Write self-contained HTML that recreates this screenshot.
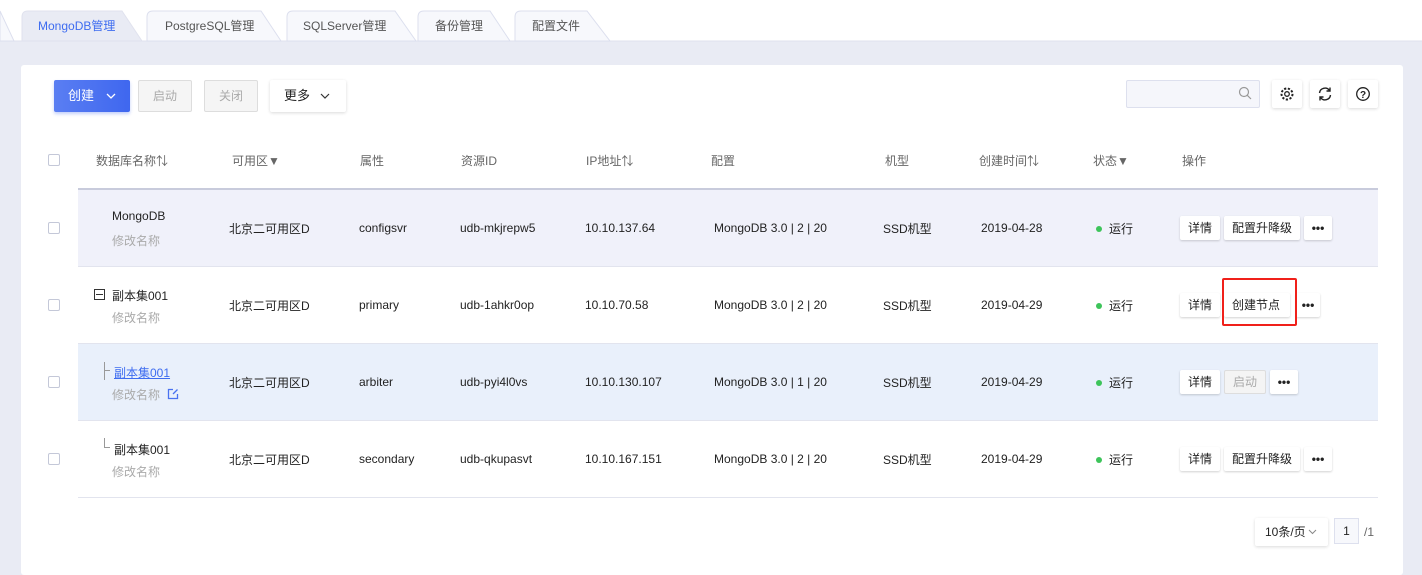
<!DOCTYPE html>
<html><head><meta charset="utf-8"><style>
*{margin:0;padding:0;box-sizing:border-box}
body{width:1422px;height:568px;overflow:hidden;background:#e9ebf4;font-family:"Liberation Sans","Noto Sans CJK SC",sans-serif;font-size:12px;color:#222;position:relative}
.a{position:absolute}
.tt{position:absolute;top:17px;font-size:12px;color:#555;white-space:nowrap}
.card{left:21px;top:65px;width:1382px;height:510px;background:#fff;border-radius:3px}
.btn{position:absolute;height:32px;border:1px solid #ddd;background:#f5f5f5;color:#aaa;text-align:center;line-height:30px;border-radius:2px}
.sb{position:absolute;background:#fff;border-radius:2px;box-shadow:0 1px 3px rgba(0,0,0,.15);text-align:center}
.th{position:absolute;top:152px;color:#666;font-size:12px;white-space:nowrap}
.row{position:absolute;left:78px;width:1300px;height:77px;border-bottom:1px solid #e2e4ee}
.cb{position:absolute;left:48px;width:12px;height:12px;border:1px solid #c4c8d8;border-radius:2px;background:#fff}
.c{position:absolute;font-size:12px;color:#222;white-space:nowrap}
.g{color:#aaa}
.dot{display:inline-block;width:6px;height:6px;border-radius:50%;background:#3dc45a;margin-right:7px;vertical-align:1px}
.ab{position:absolute;height:24px;line-height:24px;padding:0 8px;background:#fff;box-shadow:0 1px 2px rgba(0,0,0,.18);border-radius:2px;font-size:12px;color:#222;white-space:nowrap}
</style></head><body>
<svg class="a" style="left:0;top:0" width="1422" height="42">
<rect x="0" y="0" width="1422" height="41" fill="#fff"/>
<path d="M0 41H1422" stroke="#dfe1ee"/>
<path d="M0 11L14 41H0Z" fill="#f7f8fc" stroke="#dcdfee"/>
<path d="M22 41V17Q22 11 28 11H122L142 41Z" fill="#e9ebf4" stroke="#e0e2ee"/>
<path d="M147 41V17Q147 11 153 11H261L281 41Z" fill="#f7f8fc" stroke="#dcdfee"/>
<path d="M287 41V17Q287 11 293 11H395L416 41Z" fill="#f7f8fc" stroke="#dcdfee"/>
<path d="M418 41V17Q418 11 424 11H490L510 41Z" fill="#f7f8fc" stroke="#dcdfee"/>
<path d="M515 41V17Q515 11 521 11H587L610 41Z" fill="#f7f8fc" stroke="#dcdfee"/>
</svg>
<div class="tt" style="left:38px;color:#3e6cf0">MongoDB管理</div>
<div class="tt" style="left:165px">PostgreSQL管理</div>
<div class="tt" style="left:303px">SQLServer管理</div>
<div class="tt" style="left:435px">备份管理</div>
<div class="tt" style="left:532px">配置文件</div>

<div class="a card"></div>
<div class="a" style="left:54px;top:80px;width:76px;height:32px;background:linear-gradient(90deg,#5a7ef2,#3f67ef);border-radius:2px;color:#fff;line-height:32px;padding-left:14px;font-size:13px;box-shadow:0 2px 3px rgba(60,100,240,.3)">创建</div>
<svg class="a" style="left:106px;top:92px" width="10" height="8"><path d="M1 2L5 6L9 2" fill="none" stroke="#fff" stroke-width="1.3"/></svg>
<div class="btn" style="left:138px;top:80px;width:54px">启动</div>
<div class="btn" style="left:204px;top:80px;width:54px">关闭</div>
<div class="sb" style="left:270px;top:80px;width:76px;height:32px;line-height:32px;font-size:13px;text-align:left;padding-left:14px">更多</div>
<svg class="a" style="left:320px;top:92px" width="10" height="8"><path d="M1 2L5 6L9 2" fill="none" stroke="#333" stroke-width="1.2"/></svg>

<div class="a" style="left:1126px;top:80px;width:134px;height:28px;background:#f5f6fb;border:1px solid #dde0ee;border-radius:2px"></div>
<svg class="a" style="left:1238px;top:86px" width="14" height="14"><circle cx="6" cy="6" r="4.5" fill="none" stroke="#999" stroke-width="1.2"/><path d="M9.3 9.3L13 13" stroke="#999" stroke-width="1.2"/></svg>
<div class="sb" style="left:1272px;top:80px;width:30px;height:28px"></div>
<svg class="a" style="left:1279px;top:86px" width="16" height="16" viewBox="0 0 16 16"><circle cx="8" cy="8" r="2.3" fill="none" stroke="#222" stroke-width="1.3"/><circle cx="8" cy="8" r="5.5" fill="none" stroke="#222" stroke-width="2" stroke-dasharray="2.2 1.6"/></svg>
<div class="sb" style="left:1310px;top:80px;width:30px;height:28px"></div>
<svg class="a" style="left:1317px;top:86px" width="16" height="16" viewBox="0 0 16 16"><path d="M2.5 7A5.5 5.5 0 0 1 12.5 4.5M13.5 9A5.5 5.5 0 0 1 3.5 11.5" fill="none" stroke="#222" stroke-width="1.4"/><path d="M13 1.5v3.5h-3.5M3 14.5V11h3.5" fill="none" stroke="#222" stroke-width="1.4"/></svg>
<div class="sb" style="left:1348px;top:80px;width:30px;height:28px"></div>
<svg class="a" style="left:1355px;top:86px" width="16" height="16"><circle cx="8" cy="8" r="6.3" fill="none" stroke="#222" stroke-width="1.3"/><text x="8" y="12" font-size="10" text-anchor="middle" font-family="Liberation Sans" font-weight="bold" fill="#222">?</text></svg>

<div class="cb" style="top:154px"></div>
<div class="th" style="left:96px">数据库名称⇅</div>
<div class="th" style="left:232px">可用区▼</div>
<div class="th" style="left:360px">属性</div>
<div class="th" style="left:461px">资源ID</div>
<div class="th" style="left:586px">IP地址⇅</div>
<div class="th" style="left:711px">配置</div>
<div class="th" style="left:885px">机型</div>
<div class="th" style="left:979px">创建时间⇅</div>
<div class="th" style="left:1093px">状态▼</div>
<div class="th" style="left:1182px">操作</div>
<div class="a" style="left:78px;top:188px;width:1300px;height:2px;background:#c8cbdc"></div>

<div class="row" style="top:190px;background:#f0f1fa"></div>
<div class="row" style="top:267px;background:#fff"></div>
<div class="row" style="top:344px;background:#e9f0fb"></div>
<div class="row" style="top:421px;background:#fff"></div>

<div class="cb" style="top:222px"></div>
<div class="c" style="left:112px;top:209px">MongoDB</div>
<div class="c g" style="left:112px;top:232px">修改名称</div>
<div class="cb" style="top:299px"></div>
<div class="a" style="left:94px;top:289px;width:11px;height:11px;border:1px solid #333"></div>
<div class="a" style="left:96px;top:294px;width:7px;height:1px;background:#333"></div>
<div class="c" style="left:112px;top:287px">副本集001</div>
<div class="c g" style="left:112px;top:309px">修改名称</div>
<div class="cb" style="top:376px"></div>
<div class="a" style="left:104px;top:362px;width:1px;height:18px;background:#999"></div>
<div class="a" style="left:104px;top:370px;width:6px;height:1px;background:#999"></div>
<div class="c" style="left:114px;top:364px;color:#3e6cf0;text-decoration:underline">副本集001</div>
<div class="c g" style="left:112px;top:386px">修改名称</div>
<svg class="a" style="left:167px;top:388px" width="12" height="12"><path d="M6 1.5H1.5V10.5H10.5V6" fill="none" stroke="#4a72f0" stroke-width="1.3"/><path d="M6 6L10.5 1.5" stroke="#4a72f0" stroke-width="1.3"/></svg>
<div class="cb" style="top:453px"></div>
<div class="a" style="left:104px;top:438px;width:1px;height:10px;background:#999"></div>
<div class="a" style="left:104px;top:447px;width:6px;height:1px;background:#999"></div>
<div class="c" style="left:114px;top:441px">副本集001</div>
<div class="c g" style="left:112px;top:463px">修改名称</div>

<div class="c" style="left:229px;top:220px">北京二可用区D</div>
<div class="c" style="left:229px;top:297px">北京二可用区D</div>
<div class="c" style="left:229px;top:374px">北京二可用区D</div>
<div class="c" style="left:229px;top:451px">北京二可用区D</div>
<div class="c" style="left:359px;top:221px">configsvr</div>
<div class="c" style="left:359px;top:298px">primary</div>
<div class="c" style="left:359px;top:375px">arbiter</div>
<div class="c" style="left:359px;top:452px">secondary</div>
<div class="c" style="left:460px;top:221px">udb-mkjrepw5</div>
<div class="c" style="left:460px;top:298px">udb-1ahkr0op</div>
<div class="c" style="left:460px;top:375px">udb-pyi4l0vs</div>
<div class="c" style="left:460px;top:452px">udb-qkupasvt</div>
<div class="c" style="left:585px;top:221px">10.10.137.64</div>
<div class="c" style="left:585px;top:298px">10.10.70.58</div>
<div class="c" style="left:585px;top:375px">10.10.130.107</div>
<div class="c" style="left:585px;top:452px">10.10.167.151</div>
<div class="c" style="left:714px;top:221px">MongoDB 3.0 | 2 | 20</div>
<div class="c" style="left:714px;top:298px">MongoDB 3.0 | 2 | 20</div>
<div class="c" style="left:714px;top:375px">MongoDB 3.0 | 1 | 20</div>
<div class="c" style="left:714px;top:452px">MongoDB 3.0 | 2 | 20</div>
<div class="c" style="left:883px;top:220px">SSD机型</div>
<div class="c" style="left:883px;top:297px">SSD机型</div>
<div class="c" style="left:883px;top:374px">SSD机型</div>
<div class="c" style="left:883px;top:451px">SSD机型</div>
<div class="c" style="left:981px;top:221px">2019-04-28</div>
<div class="c" style="left:981px;top:298px">2019-04-29</div>
<div class="c" style="left:981px;top:375px">2019-04-29</div>
<div class="c" style="left:981px;top:452px">2019-04-29</div>
<div class="c" style="left:1096px;top:220px"><span class="dot"></span>运行</div>
<div class="c" style="left:1096px;top:297px"><span class="dot"></span>运行</div>
<div class="c" style="left:1096px;top:374px"><span class="dot"></span>运行</div>
<div class="c" style="left:1096px;top:451px"><span class="dot"></span>运行</div>

<div class="ab" style="left:1180px;top:216px">详情</div>
<div class="ab" style="left:1224px;top:216px">配置升降级</div>
<div class="ab" style="left:1304px;top:216px;width:28px;text-align:center;font-weight:bold;padding:0">•••</div>
<div class="ab" style="left:1180px;top:293px">详情</div>
<div class="ab" style="left:1224px;top:293px;width:66px">创建节点</div>
<div class="ab" style="left:1296px;top:293px;width:24px;text-align:center;font-weight:bold;padding:0">•••</div>
<div class="a" style="left:1222px;top:278px;width:75px;height:48px;border:2px solid #f0201a;border-radius:2px"></div>
<div class="ab" style="left:1180px;top:370px">详情</div>
<div class="ab" style="left:1224px;top:370px;background:#f4f4f4;color:#aaa;border:1px solid #ddd;box-shadow:none;line-height:22px">启动</div>
<div class="ab" style="left:1270px;top:370px;width:28px;text-align:center;font-weight:bold;padding:0">•••</div>
<div class="ab" style="left:1180px;top:447px">详情</div>
<div class="ab" style="left:1224px;top:447px">配置升降级</div>
<div class="ab" style="left:1304px;top:447px;width:28px;text-align:center;font-weight:bold;padding:0">•••</div>

<div class="sb" style="left:1255px;top:518px;width:73px;height:28px;line-height:28px;font-size:12px;text-align:left;padding-left:10px">10条/页</div>
<svg class="a" style="left:1308px;top:529px" width="9" height="6"><path d="M1 1L4.5 4.5L8 1" fill="none" stroke="#888" stroke-width="1"/></svg>
<div class="a" style="left:1334px;top:518px;width:25px;height:26px;border:1px solid #dde0ee;background:#f7f8fc;text-align:center;line-height:24px">1</div>
<div class="c" style="left:1364px;top:525px;color:#666">/1</div>
</body></html>
